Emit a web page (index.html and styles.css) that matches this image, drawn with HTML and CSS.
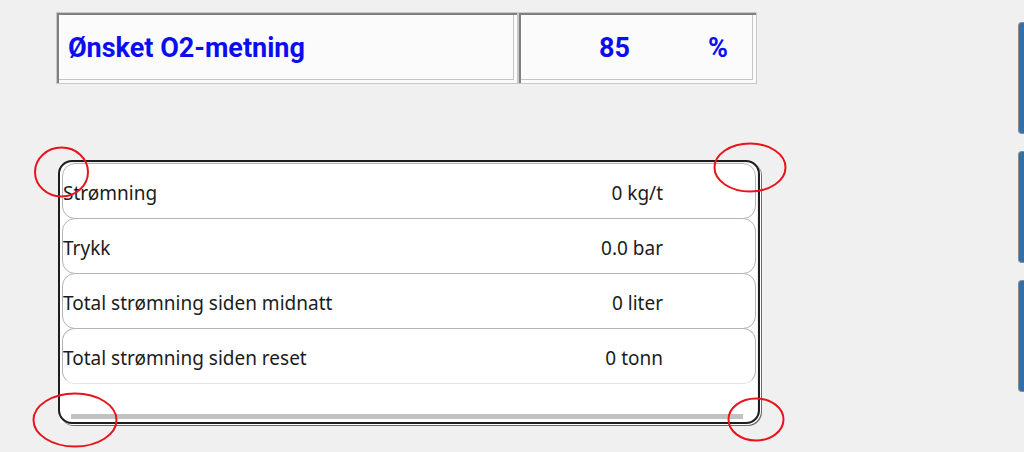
FILE: index.html
```html
<!DOCTYPE html>
<html lang="no">
<head>
<meta charset="utf-8">
<title>O2</title>
<link rel="stylesheet" href="styles.css">
</head>
<body>
<div class="screen">
  <main class="main">
    <div class="setpoint">
      <div class="cell cell-label">Ønsket O2-metning</div>
      <div class="cell cell-value"><span class="num">85</span><span class="unit">%</span></div>
    </div>
    <div class="panel-bg">
      <div class="panel">
        <div class="row"><span class="lbl">Strømning</span><span class="val">0 kg/t</span></div>
        <div class="row"><span class="lbl">Trykk</span><span class="val">0.0 bar</span></div>
        <div class="row"><span class="lbl">Total strømning siden midnatt</span><span class="val">0 liter</span></div>
        <div class="row row-last"><span class="lbl">Total strømning siden reset</span><span class="val">0 tonn</span></div>
        <div class="spacer"></div>
        <div class="bar"></div>
      </div>
    </div>
  </main>
  <aside class="side">
    <div class="tab"></div>
    <div class="tab"></div>
    <div class="tab"></div>
  </aside>
  <svg class="marks" width="1024" height="452" viewBox="0 0 1024 452" aria-hidden="true">
    <ellipse cx="61.5" cy="172" rx="26.5" ry="24.5"/>
    <ellipse cx="750" cy="167.5" rx="35.5" ry="24"/>
    <ellipse cx="75" cy="420" rx="41.5" ry="26.5"/>
    <ellipse cx="756" cy="419.5" rx="27.5" ry="21"/>
  </svg>
</div>
</body>
</html>
```
FILE: styles.css
```css
html, body {
  margin: 0;
  padding: 0;
  background: #f0f0f0;
}
.screen {
  position: relative;
  display: flex;
  width: 1024px;
  height: 452px;
  overflow: hidden;
}
.main {
  flex: 1;
  padding: 12px 0 0 56px;
  display: flex;
  flex-direction: column;
}
.setpoint {
  display: flex;
  width: 701px;
  height: 72px;
}
.cell {
  box-sizing: border-box;
  height: 72px;
  background: #fbfbfb;
  border: 1px solid #c8c8c8;
  box-shadow: inset 2px 2px 0 #808080, inset -3px -3px 0 #fbfbfb, inset -4px -4px 0 #c4c4c4;
  font-family: Roboto, "Liberation Sans", sans-serif;
  font-weight: 700;
  font-size: 27px;
  color: #0c0cf0;
  display: flex;
  align-items: center;
}
.cell-label {
  width: 462px;
  padding-left: 11px;
}
.cell-value {
  width: 239px;
}
.num {
  width: 111px;
  text-align: right;
}
.unit {
  margin-left: 78px;
}
.panel-bg {
  margin: 79px 0 0 4px;
  width: 697px;
  height: 260px;
  background: #ffffff;
  display: flex;
}
.panel {
  flex: 1;
  margin: -3px -3px -1px -2px;
  border: 2px solid #1e1e1e;
  border-radius: 14px;
  box-shadow: 1px 1px 0 0 #ffffff, 2px 2px 0 0 #6a6a6a;
  padding: 1px 2px 0 2px;
  display: flex;
  flex-direction: column;
  overflow: hidden;
}
.row {
  box-sizing: border-box;
  height: 56px;
  flex: none;
  border: 1px solid #b4b4b4;
  border-radius: 13px;
  background: #ffffff;
  display: flex;
  align-items: center;
  justify-content: space-between;
  padding: 3px 92px 0 0;
  font-family: "Noto Sans", "DejaVu Sans", sans-serif;
  font-size: 19px;
  color: #1c1c1c;
}
.row + .row {
  margin-top: -1px;
}
.row-last {
  border-bottom-color: #e6e6e6;
}
.spacer {
  flex: 1;
}
.bar {
  height: 5px;
  margin: 0 13px 3px 9px;
  background: #c2c2c2;
}
.side {
  width: 6px;
  padding-top: 22px;
  display: flex;
  flex-direction: column;
  gap: 17px;
}
.tab {
  box-sizing: border-box;
  height: 112px;
  background: #3070ab;
  border: 1px solid #8c8c8c;
  border-right: none;
  border-radius: 4px 0 0 4px;
}
.marks {
  position: absolute;
  left: 0;
  top: 0;
  pointer-events: none;
}
.marks ellipse {
  fill: none;
  stroke: #e8141c;
  stroke-width: 2;
}
```
